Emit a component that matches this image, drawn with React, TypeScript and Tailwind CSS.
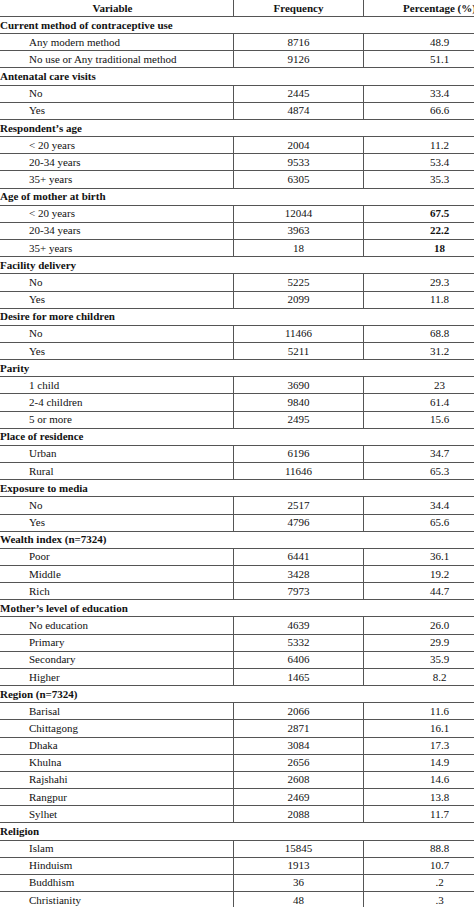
import React from "react"

interface DataRow {
  label: string
  frequency: string
  percentage: string
  bold?: boolean
}

interface Section {
  title: string
  rows: DataRow[]
}

const sections: Section[] = [
  {
    title: "Current method of contraceptive use",
    rows: [
      { label: "Any modern method", frequency: "8716", percentage: "48.9" },
      { label: "No use or Any traditional method", frequency: "9126", percentage: "51.1" },
    ],
  },
  {
    title: "Antenatal care visits",
    rows: [
      { label: "No", frequency: "2445", percentage: "33.4" },
      { label: "Yes", frequency: "4874", percentage: "66.6" },
    ],
  },
  {
    title: "Respondent’s age",
    rows: [
      { label: "< 20 years", frequency: "2004", percentage: "11.2" },
      { label: "20-34 years", frequency: "9533", percentage: "53.4" },
      { label: "35+ years", frequency: "6305", percentage: "35.3" },
    ],
  },
  {
    title: "Age of mother at birth",
    rows: [
      { label: "< 20 years", frequency: "12044", percentage: "67.5", bold: true },
      { label: "20-34 years", frequency: "3963", percentage: "22.2", bold: true },
      { label: "35+ years", frequency: "18", percentage: "18", bold: true },
    ],
  },
  {
    title: "Facility delivery",
    rows: [
      { label: "No", frequency: "5225", percentage: "29.3" },
      { label: "Yes", frequency: "2099", percentage: "11.8" },
    ],
  },
  {
    title: "Desire for more children",
    rows: [
      { label: "No", frequency: "11466", percentage: "68.8" },
      { label: "Yes", frequency: "5211", percentage: "31.2" },
    ],
  },
  {
    title: "Parity",
    rows: [
      { label: "1 child", frequency: "3690", percentage: "23" },
      { label: "2-4 children", frequency: "9840", percentage: "61.4" },
      { label: "5 or more", frequency: "2495", percentage: "15.6" },
    ],
  },
  {
    title: "Place of residence",
    rows: [
      { label: "Urban", frequency: "6196", percentage: "34.7" },
      { label: "Rural", frequency: "11646", percentage: "65.3" },
    ],
  },
  {
    title: "Exposure to media",
    rows: [
      { label: "No", frequency: "2517", percentage: "34.4" },
      { label: "Yes", frequency: "4796", percentage: "65.6" },
    ],
  },
  {
    title: "Wealth index (n=7324)",
    rows: [
      { label: "Poor", frequency: "6441", percentage: "36.1" },
      { label: "Middle", frequency: "3428", percentage: "19.2" },
      { label: "Rich", frequency: "7973", percentage: "44.7" },
    ],
  },
  {
    title: "Mother’s level of education",
    rows: [
      { label: "No education", frequency: "4639", percentage: "26.0" },
      { label: "Primary", frequency: "5332", percentage: "29.9" },
      { label: "Secondary", frequency: "6406", percentage: "35.9" },
      { label: "Higher", frequency: "1465", percentage: "8.2" },
    ],
  },
  {
    title: "Region (n=7324)",
    rows: [
      { label: "Barisal", frequency: "2066", percentage: "11.6" },
      { label: "Chittagong", frequency: "2871", percentage: "16.1" },
      { label: "Dhaka", frequency: "3084", percentage: "17.3" },
      { label: "Khulna", frequency: "2656", percentage: "14.9" },
      { label: "Rajshahi", frequency: "2608", percentage: "14.6" },
      { label: "Rangpur", frequency: "2469", percentage: "13.8" },
      { label: "Sylhet", frequency: "2088", percentage: "11.7" },
    ],
  },
  {
    title: "Religion",
    rows: [
      { label: "Islam", frequency: "15845", percentage: "88.8" },
      { label: "Hinduism", frequency: "1913", percentage: "10.7" },
      { label: "Buddhism", frequency: "36", percentage: ".2" },
      { label: "Christianity", frequency: "48", percentage: ".3" },
    ],
  },
]

export default function App() {
  return (
    <div
      className="w-[474px] h-[907px] overflow-hidden bg-white text-[11px] leading-none text-[#111]"
      style={{ fontFamily: '"Liberation Serif", "Times New Roman", serif' }}
    >
      <div className="ml-[-8px] w-[523px]">
        {/* header */}
        <div className="grid grid-cols-[241px_130px_152px] h-[17px] border-b border-[#555] font-bold">
          <div className="flex items-center justify-center">Variable</div>
          <div className="flex items-center justify-center border-l border-[#555]">Frequency</div>
          <div className="flex items-center justify-center border-l border-[#555]">Percentage (%)</div>
        </div>

        {sections.map((section) => (
          <div key={section.title}>
            <div className="h-[17.17px] flex items-center pl-[8px] border-b border-[#555] font-bold">
              {section.title}
            </div>
            {section.rows.map((row) => (
              <div
                key={section.title + row.label}
                className="grid grid-cols-[241px_130px_152px] h-[17.17px] border-b border-[#555]"
              >
                <div className="flex items-center pl-[37px]">{row.label}</div>
                <div className="flex items-center justify-center border-l border-[#555]">
                  {row.frequency}
                </div>
                <div
                  className={`flex items-center justify-center border-l border-[#555] ${
                    row.bold ? "font-bold" : ""
                  }`}
                >
                  {row.percentage}
                </div>
              </div>
            ))}
          </div>
        ))}
      </div>
    </div>
  )
}
